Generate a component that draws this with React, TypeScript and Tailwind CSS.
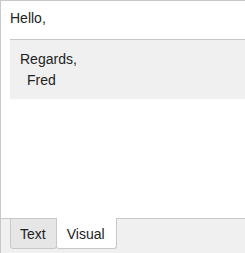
import React from "react";

export default function App() {
  return (
    <div
      className="flex h-[253px] w-[245px] flex-col overflow-hidden border-l border-t border-[#c8c8c8] bg-white text-[14px] leading-[21px] text-[#222]"
      style={{ fontFamily: '"Liberation Sans", Arial, sans-serif' }}
    >
      <div className="flex-1 pl-[9px] pt-[7px]">
        <div>Hello,</div>
        <div className="mt-[10px] border-t border-[#c8c8c8] bg-[#f0f0f0] pb-[8px] pl-[10px] pt-[9px]">
          <div>Regards,</div>
          <div className="pl-[7px]">Fred</div>
        </div>
      </div>
      <div className="flex h-[35px] border-t border-[#c8c8c8] bg-[#f0f0f0] pl-[9px]">
        <button className="-mt-px flex h-[31px] items-center rounded-b-[3px] border border-[#c8c8c8] bg-[#e6e6e6] pl-[9px] pr-[10px] pt-[2px] text-[14px] text-[#222]">
          Text
        </button>
        <button className="-ml-px -mt-px flex h-[31px] items-center rounded-b-[3px] border border-t-0 border-[#c8c8c8] bg-white pl-[10px] pr-[11px] pt-[2px] text-[14px] text-[#222]">
          Visual
        </button>
      </div>
    </div>
  );
}
